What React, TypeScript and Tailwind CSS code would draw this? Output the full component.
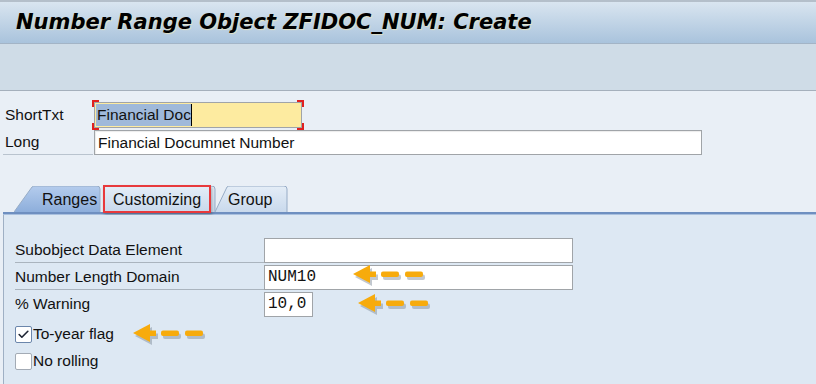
import { Check } from 'lucide-react';

const SANS = "font-['Liberation_Sans',Arial,sans-serif]";
const MONO = "font-['Liberation_Mono','Courier_New',monospace]";

function Arrow({ className }: { className?: string }) {
  return (
    <svg
      width="76"
      height="24"
      viewBox="0 0 76 24"
      className={className}
    >
      <g fill="#7a8796" opacity="0.45" transform="translate(2,3)">
        <polygon points="0,9 17,0 17,18" />
        <rect x="15" y="6.5" width="8" height="5.5" />
        <rect x="28" y="6.5" width="18" height="5.5" rx="2" />
        <rect x="52" y="6.5" width="18" height="5.5" rx="2" />
      </g>
      <g fill="#f7ab0c">
        <polygon points="0,9 17,0 17,18" />
        <rect x="15" y="6.5" width="8" height="5.5" />
        <rect x="28" y="6.5" width="18" height="5.5" rx="2" />
        <rect x="52" y="6.5" width="18" height="5.5" rx="2" />
      </g>
    </svg>
  );
}

function CheckBox({ checked }: { checked?: boolean }) {
  return (
    <span
      className={`flex h-[17px] w-[17px] items-center justify-center rounded-[2px] border bg-white ${
        checked ? 'border-[#6b86ab]' : 'border-[#a3abb5]'
      }`}
    >
      {checked && <Check size={13} strokeWidth={3} className="text-[#1d2433]" />}
    </span>
  );
}

function Tab({
  label,
  width,
  slant,
  pad,
  active,
  boxed,
  className,
}: {
  label: string;
  width: number;
  slant: number;
  pad: number;
  active?: boolean;
  boxed?: boolean;
  className?: string;
}) {
  const h = 26;
  const path = `M0 ${h} L${slant} 1 Q${slant + 1} 0 ${slant + 3} 0 L${width - 4} 0 Q${width - 1} 0 ${width - 1} 3 L${width - 1} ${h}`;
  return (
    <div className={`relative h-[26px] ${className ?? ''}`} style={{ width }}>
      <svg width={width} height={h} className="absolute inset-0">
        <defs>
          <linearGradient id={`g-${label}`} x1="0" y1="0" x2="0" y2="1">
            <stop offset="0" stopColor={active ? '#b4cced' : '#e4edf7'} />
            <stop offset="1" stopColor={active ? '#8daedb' : '#c9d9ec'} />
          </linearGradient>
        </defs>
        <path d={path + ' Z'} fill={`url(#g-${label})`} />
        <path d={path} fill="none" stroke="#97acc6" strokeWidth="1" />
      </svg>
      <span
        className="relative flex h-full items-center pt-[1px] text-[16px] text-[#111]"
        style={{ paddingLeft: pad }}
      >
        {label}
      </span>
      {boxed && (
        <div className="absolute left-[-1px] top-[-1px] h-[28px] w-[108px] border-2 border-[#e8393c] shadow-[1px_2px_3px_rgba(0,0,0,0.25)]" />
      )}
    </div>
  );
}

function Corner({ className }: { className: string }) {
  return <span className={`absolute h-[7px] w-[7px] border-[#e0201f] ${className}`} />;
}

export default function App() {
  return (
    <div className={`h-[384px] w-[816px] overflow-hidden bg-[#e9eff6] ${SANS}`}>
      {/* title bar */}
      <div className="flex h-[44px] items-center border-t-2 border-b border-t-[#b4bfca] border-b-[#a3b4c6] bg-gradient-to-b from-[#d9e5f0] to-[#a9c3dc] pl-[16px]">
        <h1 className="font-['DejaVu_Sans',Verdana,sans-serif] text-[21px] font-bold italic text-black [text-shadow:1px_1px_1px_rgba(255,240,180,0.6)]">
          Number Range Object ZFIDOC_NUM: Create
        </h1>
      </div>

      {/* toolbar */}
      <div className="h-[47px] border-b border-[#a5b0bc] bg-[#cfdce7]" />

      {/* header fields */}
      <div className="flex flex-col gap-[2px] pt-[10px] text-[15.5px] text-[#111]">
        <div className="flex h-[27px] items-center">
          <span className="w-[90px] pl-[5px]">ShortTxt</span>
          <div className="relative ml-[4px] flex h-[26px] w-[208px] items-center border border-[#a0a4a8] bg-[#fdeba0] px-[1px]">
            <Corner className="-left-[3px] -top-[3px] border-l-2 border-t-2" />
            <Corner className="-right-[3px] -top-[3px] border-r-2 border-t-2" />
            <Corner className="-bottom-[3px] -left-[3px] border-b-2 border-l-2" />
            <Corner className="-bottom-[3px] -right-[3px] border-b-2 border-r-2" />
            <span className="flex h-[22px] items-center border-r border-r-black bg-[#9fb9da] pl-[1px]">
              Financial Doc
            </span>
          </div>
        </div>
        <div className="flex h-[25px] items-center">
          <span className="ml-[3px] flex h-full w-[90px] items-center border-b border-[#b9c3ce] pl-[2px]">
            Long
          </span>
          <div className="ml-[1px] flex h-[25px] w-[608px] items-center border border-[#a0a4a8] bg-white pl-[3px] shadow-[inset_1px_1px_1px_rgba(0,0,0,0.08)]">
            Financial Documnet Number
          </div>
        </div>
      </div>

      {/* tabs */}
      <div className="mt-[31px] flex items-end pl-[14px]">
        <Tab label="Ranges" width={87} slant={18} pad={28} active />
        <Tab label="Customizing" width={112} slant={0} pad={9} boxed className="ml-[3px]" />
        <Tab label="Group" width={73} slant={12} pad={13} className="ml-[-1px]" />
      </div>
      <div className="ml-[3px] h-[3px] border-t-2 border-b border-t-[#6e8fc0] border-b-[#a9c0de] bg-[#9bb5da]" />

      {/* tab panel */}
      <div className="relative ml-[3px] h-[200px] border-l border-[#9fb0c4] bg-[#dde8f3] pl-[11px] pt-[23px] text-[15.5px] text-[#111]">
        <div className="flex flex-col gap-[3px]">
          <div className="flex h-[24px] items-center">
            <span className="flex h-[26px] w-[249px] items-center border-b border-[#aab4be]">
              Subobject Data Element
            </span>
            <div className="h-[25px] w-[309px] border border-[#a0a4a8] bg-white" />
          </div>
          <div className="flex h-[24px] items-center">
            <span className="flex h-[26px] w-[249px] items-center border-b border-[#aab4be]">
              Number Length Domain
            </span>
            <div className={`relative flex h-[25px] w-[309px] items-center border border-[#a0a4a8] bg-white pl-[3px] text-[16px] ${MONO}`}>
              NUM10
              <Arrow className="absolute left-[88px] top-[-1px]" />
            </div>
          </div>
          <div className="flex h-[24px] items-center">
            <span className="flex h-[26px] w-[249px] items-center">% Warning</span>
            <div className={`relative flex h-[25px] w-[49px] items-center border border-[#a0a4a8] bg-white pl-[3px] text-[16px] ${MONO}`}>
              10,0
              <Arrow className="absolute left-[93px] top-[1px]" />
            </div>
          </div>
          <div className="mt-[3px] flex h-[24px] items-center gap-[1px]">
            <CheckBox checked />
            <span>To-year flag</span>
            <Arrow className="ml-[18px] mt-[4px]" />
          </div>
          <div className="flex h-[24px] items-center gap-[1px]">
            <CheckBox />
            <span>No rolling</span>
          </div>
        </div>
      </div>
    </div>
  );
}
